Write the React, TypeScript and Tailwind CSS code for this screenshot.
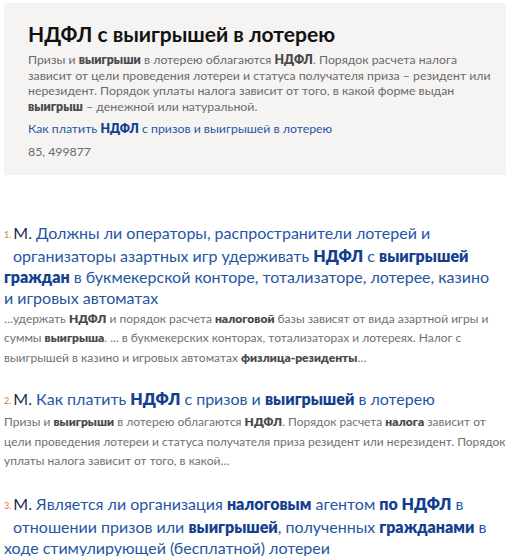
import React from 'react';

const B: React.FC<{ children: React.ReactNode }> = ({ children }) => (
    <b className="font-extrabold text-[#143f8f]">{children}</b>
);

const G: React.FC<{ children: React.ReactNode }> = ({ children }) => (
    <b className="font-extrabold text-[#4a4a4a]">{children}</b>
);

const Num: React.FC<{ n: number }> = ({ n }) => (
    <span className="text-[9px] text-[#e0762a] mr-[2px] align-[1px]">{n}.</span>
);

const Item: React.FC<{ n: number; title: React.ReactNode; snippet?: React.ReactNode; className?: string }> = ({ n, title, snippet, className }) => (
    <div className={className}>
        <div className="text-[16px] leading-[21px] text-[#2656a3] whitespace-nowrap">
            <Num n={n} />
            <span className="text-[#1c2b4a]">М.</span> {title}
        </div>
        {snippet && <div className="mt-[1px] text-[12px] leading-[19.5px] text-[#707070] whitespace-nowrap">{snippet}</div>}
    </div>
);

export default function App() {
    return (
        <div className="w-[506px] h-[556px] overflow-hidden bg-white" style={{ fontFamily: 'Lato, "Liberation Sans", sans-serif' }}>
            <div className="ml-[4px] mt-[3px] bg-[#f5f4f3] pl-6 pr-4 pt-[18px] pb-[15px] whitespace-nowrap">
                <h1 className="text-[21px] leading-[26px] font-bold text-[#111]">НДФЛ с выигрышей в лотерею</h1>
                <p className="mt-[5px] text-[12.3px] leading-[15.5px] text-[#6b6b6b]">
                    Призы и <G>выигрыши</G> в лотерею облагаются <G>НДФЛ</G>. Порядок расчета налога<br />
                    зависит от цели проведения лотереи и статуса получателя приза – резидент или<br />
                    нерезидент. Порядок уплаты налога зависит от того, в какой форме выдан<br />
                    <G>выигрыш</G> – денежной или натуральной.
                </p>
                <div className="mt-[6.5px] text-[12.3px] leading-[15.5px] text-[#2656a3]">
                    Как платить <B>НДФЛ</B> с призов и выигрышей в лотерею
                </div>
                <div className="mt-[8px] text-[12.3px] leading-[15.5px] text-[#6b6b6b]">85, 499877</div>
            </div>

            <div className="pl-[4px] pr-2">
                <Item
                    className="mt-[47px]"
                    n={1}
                    title={
                        <>
                            Должны ли операторы, распространители лотерей и<br />
                            <span className="pl-[9px]">организаторы азартных игр удерживать <B>НДФЛ</B> с <B>выигрышей</B></span>
                            <br />
                            <B>граждан</B> в букмекерской конторе, тотализаторе, лотерее, казино<br />
                            и игровых автоматах
                        </>
                    }
                    snippet={
                        <>
                            …удержать <G>НДФЛ</G> и порядок расчета <G>налоговой</G> базы зависят от вида азартной игры и<br />
                            суммы <G>выигрыша</G>. ... в букмекерских конторах, тотализаторах и лотереях. Налог с<br />
                            выигрышей в казино и игровых автоматах <G>физлица-резиденты</G>…
                        </>
                    }
                />
                <Item
                    className="mt-[21px]"
                    n={2}
                    title={
                        <>
                            Как платить <B>НДФЛ</B> с призов и <B>выигрышей</B> в лотерею
                        </>
                    }
                    snippet={
                        <>
                            Призы и <G>выигрыши</G> в лотерею облагаются <G>НДФЛ</G>. Порядок расчета <G>налога</G> зависит от<br />
                            цели проведения лотереи и статуса получателя приза резидент или нерезидент. Порядок<br />
                            уплаты налога зависит от того, в какой…
                        </>
                    }
                />
                <Item
                    className="mt-[22px]"
                    n={3}
                    title={
                        <>
                            Является ли организация <B>налоговым</B> агентом <B>по НДФЛ</B> в<br />
                            <span className="pl-[9px]">отношении призов или <B>выигрышей</B>, полученных <B>гражданами</B> в</span>
                            <br />
                            ходе стимулирующей (бесплатной) лотереи
                        </>
                    }
                />
            </div>
        </div>
    );
}
